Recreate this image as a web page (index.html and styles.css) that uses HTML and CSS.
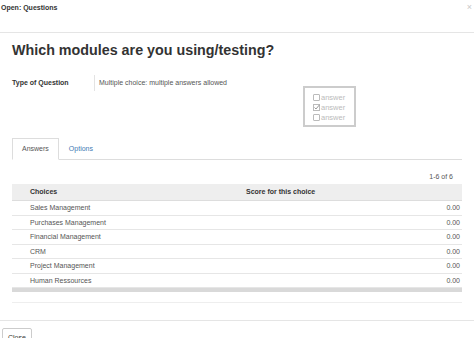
FILE: index.html
```html
<!DOCTYPE html>
<html lang="en">
<head>
  <meta charset="UTF-8" />
  <meta name="viewport" content="width=device-width, initial-scale=1.0"/>
  <title>Open: Questions</title>
  <link rel="stylesheet" href="styles.css">
</head>
<body>

  <div class="modal">
    <div class="modal-header">
      <h4 class="modal-title">Open: Questions</h4>
      <span class="close">×</span>
    </div>

    <div class="modal-body">
      <h1 class="title">Which modules are you using/testing?</h1>

      <div class="question-row">
        <div class="q-label">Type of Question</div>
        <div class="q-value">Multiple choice: multiple answers allowed</div>
        <div class="answer-preview">
          <div class="preview-line"><span class="fake-box"></span>answer</div>
          <div class="preview-line">
            <svg class="fake-check" width="7" height="7" viewBox="0 0 7 7">
              <rect x="0.5" y="0.5" width="6" height="6" fill="none" stroke="#bbb" stroke-width="1"/>
              <path d="M1.5 3.5 L3 5 L6.5 0.8" fill="none" stroke="#999" stroke-width="1"/>
            </svg>answer
          </div>
          <div class="preview-line"><span class="fake-box"></span>answer</div>
        </div>
      </div>

      <ul class="tabs">
        <li class="active"><a>Answers</a></li>
        <li><a class="link">Options</a></li>
      </ul>

      <div class="pager">1-6 of 6</div>

      <table class="list">
        <thead>
          <tr>
            <th class="handle"></th>
            <th class="col-choice">Choices</th>
            <th class="col-score">Score for this choice</th>
          </tr>
        </thead>
        <tbody>
          <tr><td class="handle"></td><td>Sales Management</td><td class="num">0.00</td></tr>
          <tr><td class="handle"></td><td>Purchases Management</td><td class="num">0.00</td></tr>
          <tr><td class="handle"></td><td>Financial Management</td><td class="num">0.00</td></tr>
          <tr><td class="handle"></td><td>CRM</td><td class="num">0.00</td></tr>
          <tr><td class="handle"></td><td>Project Management</td><td class="num">0.00</td></tr>
          <tr><td class="handle"></td><td>Human Ressources</td><td class="num">0.00</td></tr>
        </tbody>
        <tfoot>
          <tr><td></td><td></td><td></td></tr>
        </tfoot>
      </table>
    </div>

    <div class="modal-footer">
      <button class="btn">Close</button>
    </div>
  </div>

</body>
</html>
```

FILE: styles.css
```css
* {
  box-sizing: border-box;
}
body {
  margin: 0;
  font-family: 'Liberation Sans', Arial, sans-serif;
  font-size: 7px;
  color: #555;
  background-color: #fff;
}
.modal {
  width: 474px;
}
.modal-header {
  height: 33px;
  padding: 3px 2px 0 1px;
  border-bottom: 1px solid #e5e5e5;
  display: flex;
  justify-content: space-between;
  align-items: flex-start;
}
.modal-title {
  margin: 0;
  font-size: 7px;
  line-height: 10px;
  font-weight: bold;
  color: #333;
}
.close {
  font-size: 9px;
  line-height: 8px;
  color: #c8c8c8;
}
.modal-body {
  padding: 0 12px 17px;
}
.title {
  margin: 9px 0 0;
  font-size: 14.3px;
  line-height: 16px;
  font-weight: bold;
  color: #333;
}
.question-row {
  display: flex;
  align-items: flex-start;
  margin-top: 17px;
}
.q-label {
  width: 82px;
  line-height: 16px;
  font-weight: bold;
  color: #333;
}
.q-value {
  width: 209px;
  line-height: 16px;
  padding-left: 4px;
  border-left: 1px solid #e3e3e3;
}
.answer-preview {
  width: 53px;
  margin-top: 11px;
  padding: 4px 0 3px 8px;
  border: 2px solid #ccc;
  color: #bbb;
}
.preview-line {
  display: flex;
  align-items: center;
  height: 10px;
  font-size: 7.5px;
}
.fake-box {
  width: 7px;
  height: 7px;
  border: 1px solid #bbb;
  border-radius: 1px;
  margin-right: 1px;
}
.fake-check {
  margin-right: 1px;
}
.tabs {
  list-style: none;
  margin: 11px 0 0;
  padding: 0;
  display: flex;
  border-bottom: 1px solid #ddd;
}
.tabs li {
  margin-bottom: -1px;
}
.tabs a {
  display: block;
  padding: 0 9px;
  line-height: 20px;
  border: 1px solid transparent;
  color: #555;
}
.tabs .active a {
  border-color: #ddd #ddd transparent;
  background-color: #fff;
}
.tabs .link {
  color: #3f7ab4;
}
.pager {
  margin-top: 12px;
  padding-right: 9px;
  line-height: 10px;
  text-align: right;
}
.list {
  width: 100%;
  margin-top: 2px;
  border-collapse: separate;
  border-spacing: 0;
}
.list th {
  background-color: #eee;
  line-height: 16px;
  border-bottom: 1px solid #ddd;
  text-align: left;
  font-weight: bold;
  color: #333;
  padding: 0 3px;
}
.list td {
  line-height: 13.5px;
  padding: 0 3px;
  border-bottom: 1px solid #e6e6e6;
}
.list .handle {
  width: 15px;
  padding: 0;
}
.list .col-choice {
  width: 216px;
}
.list .num {
  text-align: right;
  padding-right: 2px;
}
.list tfoot td {
  height: 15px;
  border-top: 4px solid #d9d9d9;
  border-bottom: 1px solid #eee;
}
.modal-footer {
  border-top: 1px solid #e5e5e5;
  padding: 7px 2px;
}
.btn {
  font-family: 'Liberation Sans', Arial, sans-serif;
  font-size: 7px;
  line-height: 10px;
  padding: 4px 5px;
  color: #333;
  background-color: #fff;
  border: 1px solid #ccc;
  border-radius: 2px;
}
```
